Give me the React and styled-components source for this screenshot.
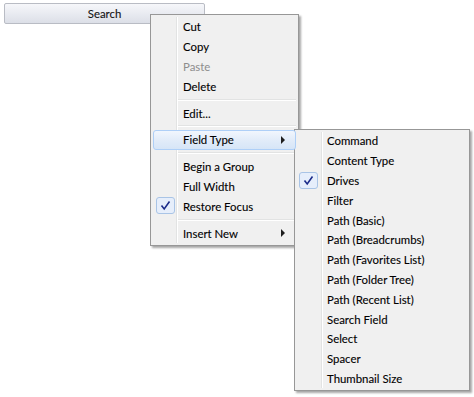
import React from "react";
import styled, { createGlobalStyle } from "styled-components";

const GlobalStyle = createGlobalStyle`
  html, body {
    margin: 0;
    padding: 0;
    background: #fff;
    font-family: Lato, "Noto Sans", sans-serif;
  }
`;

const Canvas = styled.div`
  position: relative;
  width: 474px;
  height: 397px;
  overflow: hidden;
  background: #fff;
  padding: 3px 0 0 4px;
  box-sizing: border-box;
`;

const SearchButton = styled.div`
  width: 201px;
  height: 21px;
  box-sizing: border-box;
  border: 1px solid #b9bcc4;
  border-radius: 2px;
  background: linear-gradient(#f6f7fa 0%, #e9ebf1 50%, #dcdfe7 100%);
  display: flex;
  align-items: center;
  justify-content: center;
  font-size: 11.4px;
  color: #111;
  -webkit-text-stroke: 0.1px #111;
`;

const Menu = styled.div`
  position: absolute;
  left: ${({ $x }) => $x}px;
  top: ${({ $y }) => $y}px;
  width: ${({ $w }) => $w}px;
  box-sizing: border-box;
  border: 1px solid #979797;
  background: #f0f0f0;
  padding: ${({ $pt }) => $pt}px 2px 2px 2px;
  box-shadow: 2px 2px 2px rgba(0, 0, 0, 0.35);
  display: flex;
  flex-direction: column;

  &::before {
    content: "";
    position: absolute;
    top: 2px;
    bottom: 2px;
    left: ${({ $gutter }) => $gutter}px;
    width: 1px;
    background: #e2e3e3;
    box-shadow: 1px 0 0 #ffffff;
  }
`;

const Item = styled.div`
  position: relative;
  height: 19.8px;
  box-sizing: border-box;
  display: flex;
  align-items: center;
  padding-left: ${({ $indent }) => $indent}px;
  font-size: 11.4px;
  color: ${({ $disabled }) => ($disabled ? "#8d8d8d" : "#000")};
  -webkit-text-stroke: ${({ $disabled }) => ($disabled ? "0" : "0.1px #000")};
  border: 1px solid ${({ $active }) => ($active ? "#aecff7" : "transparent")};
  border-radius: 3px;
  background: ${({ $active }) =>
    $active ? "linear-gradient(#f1f6fd 0%, #e2ecf9 50%, #d6e5f7 100%)" : "transparent"};
  z-index: 1;
`;

const Separator = styled.div`
  height: 7px;
  margin-left: ${({ $indent }) => $indent}px;
  display: flex;
  flex-direction: column;
  justify-content: center;

  &::before {
    content: "";
    height: 1px;
    background: #e2e3e3;
  }
  &::after {
    content: "";
    height: 1px;
    background: #fff;
  }
`;

const CheckBox = styled.span`
  position: absolute;
  left: ${({ $left }) => $left}px;
  top: 0px;
  width: 19px;
  height: 17px;
  box-sizing: border-box;
  border: 1px solid #a9c4e6;
  border-radius: 3px;
  background: #e6eefb;
  display: flex;
  align-items: center;
  justify-content: center;
`;

const Arrow = styled.span`
  position: absolute;
  right: 10px;
  top: 50%;
  margin-top: -4px;
  width: 0;
  height: 0;
  border-top: 4px solid transparent;
  border-bottom: 4px solid transparent;
  border-left: 4px solid #1e1e1e;
`;

const Check = () => (
  <svg width="11" height="11" viewBox="0 0 11 11">
    <path d="M1.5 5.5 L4.2 9 L9.5 1.5" fill="none" stroke="#1c2c8a" strokeWidth="1.6" />
  </svg>
);

const mainItems = [
  { label: "Cut" },
  { label: "Copy" },
  { label: "Paste", disabled: true },
  { label: "Delete" },
  { sep: true },
  { label: "Edit..." },
  { sep: true },
  { label: "Field Type", active: true, sub: true },
  { sep: true },
  { label: "Begin a Group" },
  { label: "Full Width" },
  { label: "Restore Focus", checked: true },
  { sep: true },
  { label: "Insert New", sub: true },
];

const subItems = [
  "Command",
  "Content Type",
  "Drives",
  "Filter",
  "Path (Basic)",
  "Path (Breadcrumbs)",
  "Path (Favorites List)",
  "Path (Folder Tree)",
  "Path (Recent List)",
  "Search Field",
  "Select",
  "Spacer",
  "Thumbnail Size",
];

export default function App() {
  return (
    <Canvas>
      <GlobalStyle />
      <SearchButton>Search</SearchButton>

      <Menu $x={150} $y={14} $w={149} $pt={2} $gutter={25}>
        {mainItems.map((it, i) =>
          it.sep ? (
            <Separator key={i} $indent={24} />
          ) : (
            <Item key={i} $indent={29} $disabled={it.disabled} $active={it.active}>
              {it.checked && (
                <CheckBox $left={2}>
                  <Check />
                </CheckBox>
              )}
              {it.label}
              {it.sub && <Arrow />}
            </Item>
          )
        )}
      </Menu>

      <Menu $x={294} $y={129} $w={176} $pt={1} $gutter={26}>
        {subItems.map((label) => (
          <Item key={label} $indent={29}>
            {label === "Drives" && (
              <CheckBox $left={1}>
                <Check />
              </CheckBox>
            )}
            {label}
          </Item>
        ))}
      </Menu>
    </Canvas>
  );
}
